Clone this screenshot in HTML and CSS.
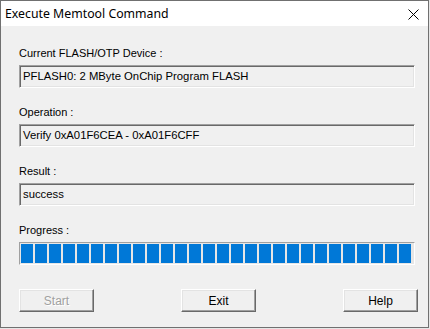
FILE: index.html
```html
<html>

<head>
    <title>Execute Memtool Command</title>
    <link rel="stylesheet" href="styles.css">
</head>

<body>
    <div class="window">
        <div class="titlebar">
            <div class="title">Execute Memtool Command</div>
            <div class="close">
                <svg width="11" height="11" viewBox="0 0 11 11">
                    <path d="M0.5 0.5 L10.5 10.5 M10.5 0.5 L0.5 10.5" stroke="#000" stroke-width="1" fill="none"/>
                </svg>
            </div>
        </div>
        <div class="content">
            <div class="group">
                <div class="label">Current FLASH/OTP Device :</div>
                <div class="field">PFLASH0: 2 MByte OnChip Program FLASH</div>
            </div>
            <div class="group">
                <div class="label">Operation :</div>
                <div class="field">Verify 0xA01F6CEA - 0xA01F6CFF</div>
            </div>
            <div class="group">
                <div class="label">Result :</div>
                <div class="field">success</div>
            </div>
            <div class="group">
                <div class="label">Progress :</div>
                <div class="progress" id="progress"></div>
            </div>
            <div class="buttons">
                <div class="button disabled">Start</div>
                <div class="button">Exit</div>
                <div class="button">Help</div>
            </div>
        </div>
    </div>

    <script>
        let progress = document.getElementById("progress")
        for (let i = 0; i < 28; i++) {
            progress.innerHTML += `<div class="block"></div>`
        }
    </script>
</body>

</html>
```

FILE: styles.css
```css
body {
    margin: 0;
    background-color: #e6e6e6;
}

.window {
    width: 429px;
    height: 328px;
    box-sizing: border-box;
    border: 1px solid #707070;
    background-color: #f0f0f0;
}

.titlebar {
    height: 25px;
    background-color: #fff;
    display: flex;
    align-items: center;
    justify-content: space-between;
}

.title {
    font-family: "Noto Sans", "Open Sans", sans-serif;
    font-size: 12.3px;
    color: #000;
    padding-left: 4px;
    padding-bottom: 1px;
}

.close {
    width: 11px;
    height: 11px;
    margin-right: 9px;
    margin-top: 2px;
}

.close svg {
    display: block;
}

.content {
    padding: 19px 0 0 18px;
    font-family: "Liberation Sans", Arial, sans-serif;
    font-size: 11px;
    color: #000;
}

.group {
    margin-bottom: 16px;
}

.label {
    height: 15px;
    line-height: 16px;
    margin-bottom: 5px;
}

.field {
    width: 396px;
    height: 23px;
    box-sizing: border-box;
    border: 1px solid;
    border-color: #a0a0a0 #fff #fff #a0a0a0;
    box-shadow: inset 1px 1px #696969, inset -1px -1px #e3e3e3;
    padding-left: 3px;
    line-height: 21px;
    font-size: 11.3px;
    white-space: nowrap;
}

.progress {
    width: 396px;
    height: 23px;
    box-sizing: border-box;
    border: 1px solid;
    border-color: #a0a0a0 #fff #fff #a0a0a0;
    background-color: #e6e6e6;
    padding: 1px;
    display: flex;
    gap: 2px;
}

.block {
    width: 12px;
    height: 19px;
    background-color: #0078d7;
}

.buttons {
    width: 399px;
    margin-top: 24px;
    display: flex;
    justify-content: space-between;
}

.button {
    width: 75px;
    height: 23px;
    box-sizing: border-box;
    border: 1px solid;
    border-color: #fff #696969 #696969 #fff;
    box-shadow: inset -1px -1px #a0a0a0, inset 1px 1px #e3e3e3;
    background-color: #f0f0f0;
    display: flex;
    justify-content: center;
    align-items: center;
    font-size: 12px;
}

.disabled {
    color: #a0a0a0;
    text-shadow: 1px 1px #fff;
}
```
